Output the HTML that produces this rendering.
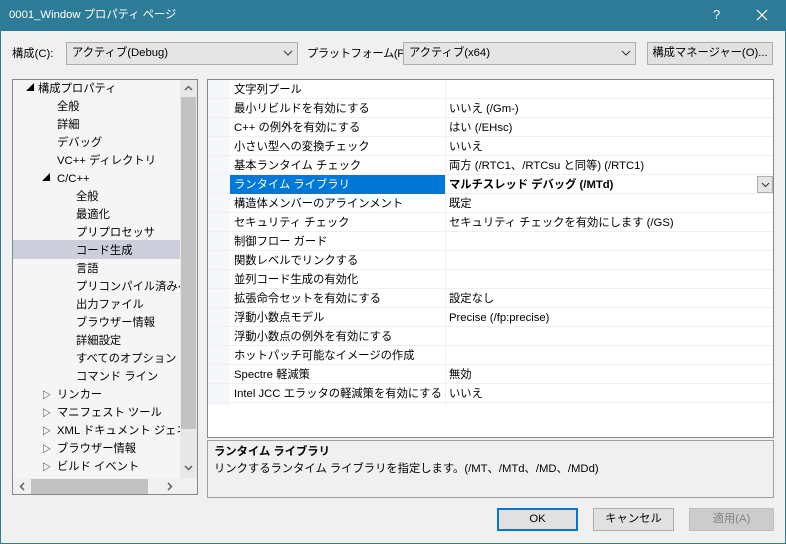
<!DOCTYPE html>
<html><head><meta charset="utf-8"><style>
*{box-sizing:border-box;margin:0;padding:0}
body{width:786px;height:544px;overflow:hidden;background:#2e7b98;font-family:"Liberation Sans","Noto Sans CJK JP",sans-serif;font-size:11.3px;color:#000;position:relative}
.abs{position:absolute}
#main{left:1px;top:31px;width:784px;height:512px;background:#f0f0f0}
.t{white-space:nowrap;line-height:18px}
.combo{border:1px solid #adadad;background:#e5e5e5;height:23px;line-height:21px;padding-left:5px}
.btn{border:1px solid #adadad;background:#e1e1e1;height:23px;line-height:21px;text-align:center}
.row{position:absolute;left:0;width:566px;height:19px;border-bottom:1px solid #f0f0f0}
.row span{position:absolute;top:1px;line-height:18px;white-space:nowrap}
</style></head><body>
<div class="abs t" style="left:9px;top:6px;color:#fff">0001_Window プロパティ ページ</div>
<div class="abs t" style="left:713px;top:6px;color:#fff;font-size:13px">?</div>
<svg class="abs" style="left:756px;top:9px" width="12" height="12"><path d="M1 1L11 11M11 1L1 11" stroke="#fff" stroke-width="1.2"/></svg>
<div id="main" class="abs"></div>
<div class="abs t" style="left:12px;top:45px">構成(C):</div>
<div class="abs combo" style="left:66px;top:42px;width:232px">アクティブ(Debug)</div>
<svg class="abs" style="left:283px;top:50px" width="10" height="6"><path d="M1 1L5 5L9 1" stroke="#333" fill="none"/></svg>
<div class="abs t" style="left:307px;top:45px;letter-spacing:-0.4px">プラットフォーム(P):</div>
<div class="abs combo" style="left:403px;top:42px;width:233px">アクティブ(x64)</div>
<svg class="abs" style="left:621px;top:50px" width="10" height="6"><path d="M1 1L5 5L9 1" stroke="#333" fill="none"/></svg>
<div class="abs btn" style="left:647px;top:42px;width:126px">構成マネージャー(O)...</div>

<!-- tree -->
<div class="abs" style="left:12px;top:79px;width:186px;height:416px;border:1px solid #828790;background:#f5f5f5;overflow:hidden">
<div class="abs" style="left:0;top:160px;width:167px;height:19px;background:#cccedb"></div>
<div class="abs" style="left:167px;top:0;width:17px;height:398px;background:#e8e8e8"></div>
<div class="abs" style="left:168px;top:17px;width:15px;height:332px;background:#c2c2c2"></div>
<svg class="abs" style="left:171px;top:5px" width="9" height="6"><path d="M1 5L4.5 1.5L8 5" stroke="#606060" stroke-width="1.5" fill="none"/></svg>
<svg class="abs" style="left:171px;top:385px" width="9" height="6"><path d="M1 1L4.5 4.5L8 1" stroke="#606060" stroke-width="1.5" fill="none"/></svg>
<div class="abs" style="left:0;top:398px;width:184px;height:17px;background:#f0f0f0"></div>
<div class="abs" style="left:18px;top:399px;width:117px;height:15px;background:#c2c2c2"></div>
<svg class="abs" style="left:6px;top:402px" width="6" height="9"><path d="M5 1L1.5 4.5L5 8" stroke="#606060" stroke-width="1.5" fill="none"/></svg>
<svg class="abs" style="left:154px;top:402px" width="6" height="9"><path d="M1 1L4.5 4.5L1 8" stroke="#606060" stroke-width="1.5" fill="none"/></svg>
<div class="abs" style="left:0;top:0;width:167px;height:398px;overflow:hidden">
<div class="abs t" style="left:13px;top:-1px;font-size:8px">◢</div><div class="abs t" style="left:25px;top:0">構成プロパティ</div>
<div class="abs t" style="left:44px;top:18px">全般</div>
<div class="abs t" style="left:44px;top:36px">詳細</div>
<div class="abs t" style="left:44px;top:54px">デバッグ</div>
<div class="abs t" style="left:44px;top:72px">VC++ ディレクトリ</div>
<div class="abs t" style="left:29px;top:89px;font-size:8px">◢</div><div class="abs t" style="left:44px;top:90px">C/C++</div>
<div class="abs t" style="left:63px;top:108px">全般</div>
<div class="abs t" style="left:63px;top:126px">最適化</div>
<div class="abs t" style="left:63px;top:144px">プリプロセッサ</div>
<div class="abs t" style="left:63px;top:162px">コード生成</div>
<div class="abs t" style="left:63px;top:180px">言語</div>
<div class="abs t" style="left:63px;top:198px">プリコンパイル済みヘッダー</div>
<div class="abs t" style="left:63px;top:216px">出力ファイル</div>
<div class="abs t" style="left:63px;top:234px">ブラウザー情報</div>
<div class="abs t" style="left:63px;top:252px">詳細設定</div>
<div class="abs t" style="left:63px;top:270px">すべてのオプション</div>
<div class="abs t" style="left:63px;top:288px">コマンド ライン</div>
<div class="abs t" style="left:29px;top:306px;font-size:9px">▷</div><div class="abs t" style="left:44px;top:306px">リンカー</div>
<div class="abs t" style="left:29px;top:324px;font-size:9px">▷</div><div class="abs t" style="left:44px;top:324px">マニフェスト ツール</div>
<div class="abs t" style="left:29px;top:342px;font-size:9px">▷</div><div class="abs t" style="left:44px;top:342px">XML ドキュメント ジェネレーター</div>
<div class="abs t" style="left:29px;top:360px;font-size:9px">▷</div><div class="abs t" style="left:44px;top:360px">ブラウザー情報</div>
<div class="abs t" style="left:29px;top:378px;font-size:9px">▷</div><div class="abs t" style="left:44px;top:378px">ビルド イベント</div>
</div>
</div>

<!-- grid -->
<div class="abs" style="left:207px;top:79px;width:567px;height:359px;border:1px solid #828790;background:#fff;overflow:hidden">
<div class="abs" style="left:0;top:0;width:22px;height:325px;background:#f5f7fb"></div>
<div class="abs" style="left:237px;top:0;width:1px;height:325px;background:#f0f0f0"></div>
<div class="row" style="top:0"><span style="left:26px">文字列プール</span></div>
<div class="row" style="top:19px"><span style="left:26px">最小リビルドを有効にする</span><span style="left:241px">いいえ (/Gm-)</span></div>
<div class="row" style="top:38px"><span style="left:26px">C++ の例外を有効にする</span><span style="left:241px">はい (/EHsc)</span></div>
<div class="row" style="top:57px"><span style="left:26px">小さい型への変換チェック</span><span style="left:241px">いいえ</span></div>
<div class="row" style="top:76px"><span style="left:26px">基本ランタイム チェック</span><span style="left:241px">両方 (/RTC1、/RTCsu と同等) (/RTC1)</span></div>
<div class="row" style="top:95px"><div class="abs" style="left:22px;top:0;width:215px;height:19px;background:#0078d7"></div><span style="left:26px;color:#fff">ランタイム ライブラリ</span><span style="left:241px;font-weight:bold">マルチスレッド デバッグ (/MTd)</span>
<div class="abs" style="left:549px;top:1px;width:16px;height:17px;border:1px solid #adadad;background:#e5e5e5"></div>
<svg class="abs" style="left:553px;top:7px" width="9" height="6"><path d="M1 1L4.5 4.5L8 1" stroke="#333" fill="none"/></svg></div>
<div class="row" style="top:114px"><span style="left:26px">構造体メンバーのアラインメント</span><span style="left:241px">既定</span></div>
<div class="row" style="top:133px"><span style="left:26px">セキュリティ チェック</span><span style="left:241px">セキュリティ チェックを有効にします (/GS)</span></div>
<div class="row" style="top:152px"><span style="left:26px">制御フロー ガード</span></div>
<div class="row" style="top:171px"><span style="left:26px">関数レベルでリンクする</span></div>
<div class="row" style="top:190px"><span style="left:26px">並列コード生成の有効化</span></div>
<div class="row" style="top:209px"><span style="left:26px">拡張命令セットを有効にする</span><span style="left:241px">設定なし</span></div>
<div class="row" style="top:228px"><span style="left:26px">浮動小数点モデル</span><span style="left:241px">Precise (/fp:precise)</span></div>
<div class="row" style="top:247px"><span style="left:26px">浮動小数点の例外を有効にする</span></div>
<div class="row" style="top:266px"><span style="left:26px">ホットパッチ可能なイメージの作成</span></div>
<div class="row" style="top:285px"><span style="left:26px">Spectre 軽減策</span><span style="left:241px">無効</span></div>
<div class="row" style="top:304px"><span style="left:26px">Intel JCC エラッタの軽減策を有効にする</span><span style="left:241px">いいえ</span></div>
</div>

<!-- description -->
<div class="abs" style="left:207px;top:440px;width:567px;height:58px;border:1px solid #a0a0a0;background:#f0f0f0">
<div class="abs t" style="left:6px;top:2px;font-weight:bold">ランタイム ライブラリ</div>
<div class="abs t" style="left:6px;top:19px">リンクするランタイム ライブラリを指定します。(/MT、/MTd、/MD、/MDd)</div>
</div>

<div class="abs btn" style="left:497px;top:508px;width:81px;border:1px solid #0078d7;box-shadow:inset 0 0 0 1px #0078d7">OK</div>
<div class="abs btn" style="left:593px;top:508px;width:81px">キャンセル</div>
<div class="abs btn" style="left:689px;top:508px;width:85px;background:#cccccc;border-color:#bfbfbf;color:#838383">適用(A)</div>
</body></html>
